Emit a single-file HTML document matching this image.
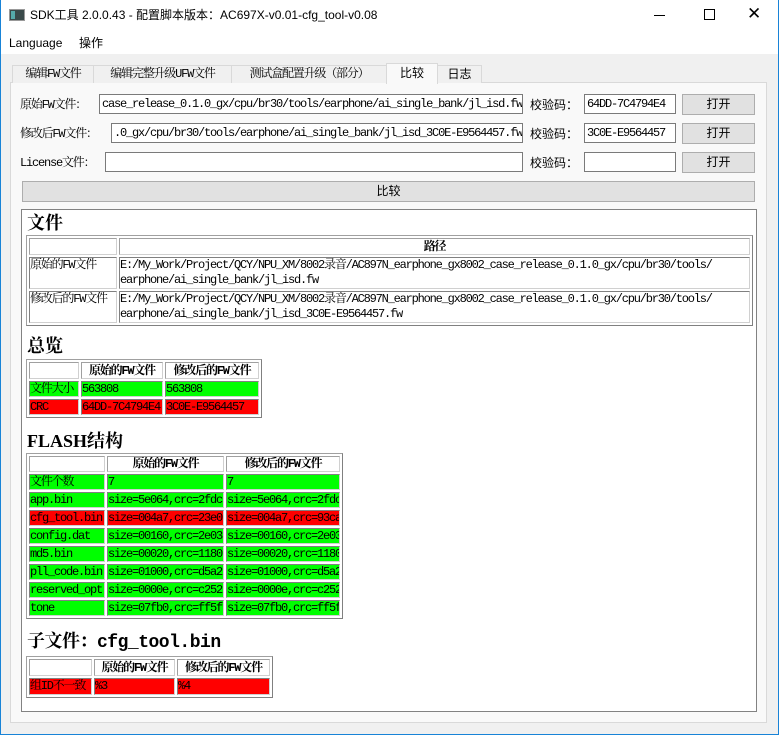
<!DOCTYPE html>
<html><head><meta charset="utf-8"><style>
*{margin:0;padding:0;box-sizing:border-box}
body{width:779px;height:735px;position:relative;background:#f0f0f0;font-family:"Liberation Sans","Noto Sans CJK SC",sans-serif;font-size:12px;color:#000;overflow:hidden}
.abs{position:absolute}
.mono{font-family:"Liberation Mono","Noto Serif CJK SC",monospace;letter-spacing:-1.2px}
.win{position:absolute;left:0;top:0;width:779px;height:735px;border:1px solid #1883d7;border-top:none}
.title{left:1px;top:0;width:777px;height:31px;background:#fff}
.menu{left:1px;top:31px;width:777px;height:23px;background:#fff}
.tab{position:absolute;top:65px;height:18px;border:1px solid #d9d9d9;border-bottom:none;background:#f0f0f0;font-size:12px;text-align:center;line-height:17px}
.pane{left:10px;top:82px;width:757px;height:641px;background:#f9f9f9;border:1px solid #d9d9d9}
.inp{position:absolute;height:20px;border:1px solid #7a7a7a;background:#fff;font-size:12px;line-height:18px;padding-left:2px;white-space:nowrap;overflow:hidden}
.btn{position:absolute;height:21px;border:1px solid #adadad;background:#e1e1e1;text-align:center;line-height:19px;font-size:12px}
.lbl{position:absolute;font-size:12px;line-height:14px}
.content{left:21px;top:209px;width:736px;height:503px;background:#fff;border:1px solid #828282}
table{position:absolute;border-collapse:separate;border-spacing:2px;border:1px solid #a0a0a0;border-right-color:#808080;border-bottom-color:#808080;table-layout:fixed}
td{border:1px solid #a0a0a0;border-top-color:#808080;border-left-color:#808080;border-right-color:#d0d0d0;border-bottom-color:#d0d0d0;font-family:"Liberation Mono","Noto Serif CJK SC",monospace;letter-spacing:-1.2px;font-size:12px;line-height:14px;white-space:nowrap;overflow:hidden;padding:0;vertical-align:top}
th{border:1px solid #a0a0a0;border-right-color:#d0d0d0;border-bottom-color:#d0d0d0;font-family:"Liberation Mono","Noto Serif CJK SC",monospace;letter-spacing:-1.2px;font-size:12px;line-height:14px;font-weight:bold;white-space:nowrap;overflow:hidden;padding:0}
.g td{background:#00ff00}
.r td{background:#ff0000}
h2{position:absolute;font-family:"Liberation Serif","Noto Serif CJK SC",serif;font-size:18px;font-weight:bold;line-height:20px}
</style></head><body>
<div class="abs title"></div>
<div class="abs" style="left:9px;top:9px;width:16px;height:12px;background:#3a4a4a;border:1px solid #999"></div>
<div class="abs" style="left:11px;top:11px;width:4px;height:8px;background:#5aa"></div>
<div class="abs" style="left:30px;top:7px;font-size:12px;line-height:16px">SDK工具 2.0.0.43 - 配置脚本版本：AC697X-v0.01-cfg_tool-v0.08</div>
<div class="abs" style="left:654px;top:15px;width:11px;height:1px;background:#000"></div>
<div class="abs" style="left:704px;top:9px;width:11px;height:11px;border:1px solid #000"></div>
<div class="abs" style="left:747px;top:4px;font-size:17px;line-height:20px;font-weight:200">✕</div>
<div class="abs menu"></div>
<div class="abs" style="left:9px;top:35px;font-size:12px;line-height:16px">Language&nbsp;&nbsp;&nbsp;&nbsp; 操作</div>

<div class="abs pane"></div>
<div class="tab mono" style="left:12px;width:82px">编辑FW文件</div>
<div class="tab mono" style="left:93px;width:139px">编辑完整升级UFW文件</div>
<div class="tab mono" style="left:231px;width:156px">测试盒配置升级（部分）</div>
<div class="tab" style="left:386px;top:63px;height:21px;width:52px;background:#f9f9f9;line-height:19px">比较</div>
<div class="tab" style="left:437px;width:45px">日志</div>

<div class="lbl mono" style="left:20px;top:98px">原始FW文件：</div>
<div class="inp mono" style="left:99px;top:94px;width:424px">case_release_0.1.0_gx/cpu/br30/tools/earphone/ai_single_bank/jl_isd.fw</div>
<div class="lbl mono" style="left:20px;top:127px">修改后FW文件：</div>
<div class="inp mono" style="left:111px;top:123px;width:412px">.0_gx/cpu/br30/tools/earphone/ai_single_bank/jl_isd_3C0E-E9564457.fw</div>
<div class="lbl mono" style="left:20px;top:156px">License文件：</div>
<div class="inp" style="left:105px;top:152px;width:418px"></div>
<div class="lbl" style="left:530px;top:98px">校验码：</div>
<div class="lbl" style="left:530px;top:127px">校验码：</div>
<div class="lbl" style="left:530px;top:156px">校验码：</div>
<div class="inp mono" style="left:584px;top:94px;width:92px">64DD-7C4794E4</div>
<div class="inp mono" style="left:584px;top:123px;width:92px">3C0E-E9564457</div>
<div class="inp" style="left:584px;top:152px;width:92px"></div>
<div class="btn" style="left:682px;top:94px;width:73px">打开</div>
<div class="btn" style="left:682px;top:123px;width:73px">打开</div>
<div class="btn" style="left:682px;top:152px;width:73px">打开</div>
<div class="btn" style="left:22px;top:181px;width:733px;height:21px">比较</div>

<div class="abs content"></div>
<h2 style="left:27px;top:213px">文件</h2>
<table style="left:26px;top:235px;width:727px">
<col style="width:88px"><col>
<tr style="height:17px"><th></th><th>路径</th></tr>
<tr style="height:29px"><td>原始的FW文件</td><td style="line-height:15px">E:/My_Work/Project/QCY/NPU_XM/8002录音/AC897N_earphone_gx8002_case_release_0.1.0_gx/cpu/br30/tools/<br>earphone/ai_single_bank/jl_isd.fw</td></tr>
<tr style="height:29px"><td>修改后的FW文件</td><td style="line-height:15px">E:/My_Work/Project/QCY/NPU_XM/8002录音/AC897N_earphone_gx8002_case_release_0.1.0_gx/cpu/br30/tools/<br>earphone/ai_single_bank/jl_isd_3C0E-E9564457.fw</td></tr>
</table>

<h2 style="left:27px;top:336px">总览</h2>
<table style="left:26px;top:359px;width:236px">
<col style="width:50px"><col style="width:82px"><col>
<tr style="height:17px"><th></th><th>原始的FW文件</th><th>修改后的FW文件</th></tr>
<tr style="height:16px" class="g"><td>文件大小</td><td>563808</td><td>563808</td></tr>
<tr style="height:16px" class="r"><td>CRC</td><td>64DD-7C4794E4</td><td>3C0E-E9564457</td></tr>
</table>

<h2 style="left:27px;top:431px">FLASH结构</h2>
<table style="left:26px;top:453px;width:317px">
<col style="width:76px"><col style="width:117px"><col>
<tr style="height:16px"><th></th><th>原始的FW文件</th><th>修改后的FW文件</th></tr>
<tr style="height:16px" class="g"><td>文件个数</td><td>7</td><td>7</td></tr>
<tr style="height:16px" class="g"><td>app.bin</td><td>size=5e064,crc=2fdc</td><td>size=5e064,crc=2fdc</td></tr>
<tr style="height:16px" class="r"><td>cfg_tool.bin</td><td>size=004a7,crc=23e0</td><td>size=004a7,crc=93ca</td></tr>
<tr style="height:16px" class="g"><td>config.dat</td><td>size=00160,crc=2e03</td><td>size=00160,crc=2e03</td></tr>
<tr style="height:16px" class="g"><td>md5.bin</td><td>size=00020,crc=1180</td><td>size=00020,crc=1180</td></tr>
<tr style="height:16px" class="g"><td>pll_code.bin</td><td>size=01000,crc=d5a2</td><td>size=01000,crc=d5a2</td></tr>
<tr style="height:16px" class="g"><td>reserved_opt</td><td>size=0000e,crc=c252</td><td>size=0000e,crc=c252</td></tr>
<tr style="height:16px" class="g"><td>tone</td><td>size=07fb0,crc=ff5f</td><td>size=07fb0,crc=ff5f</td></tr>
</table>

<h2 style="left:27px;top:633px;font-family:'Liberation Mono','Noto Serif CJK SC',monospace;letter-spacing:-0.5px">子文件：cfg_tool.bin</h2>
<table style="left:26px;top:656px;width:247px">
<col style="width:63px"><col style="width:81px"><col>
<tr style="height:17px"><th></th><th>原始的FW文件</th><th>修改后的FW文件</th></tr>
<tr style="height:17px" class="r"><td>组ID不一致</td><td>%3</td><td>%4</td></tr>
</table>

<div class="win"></div>
</body></html>
